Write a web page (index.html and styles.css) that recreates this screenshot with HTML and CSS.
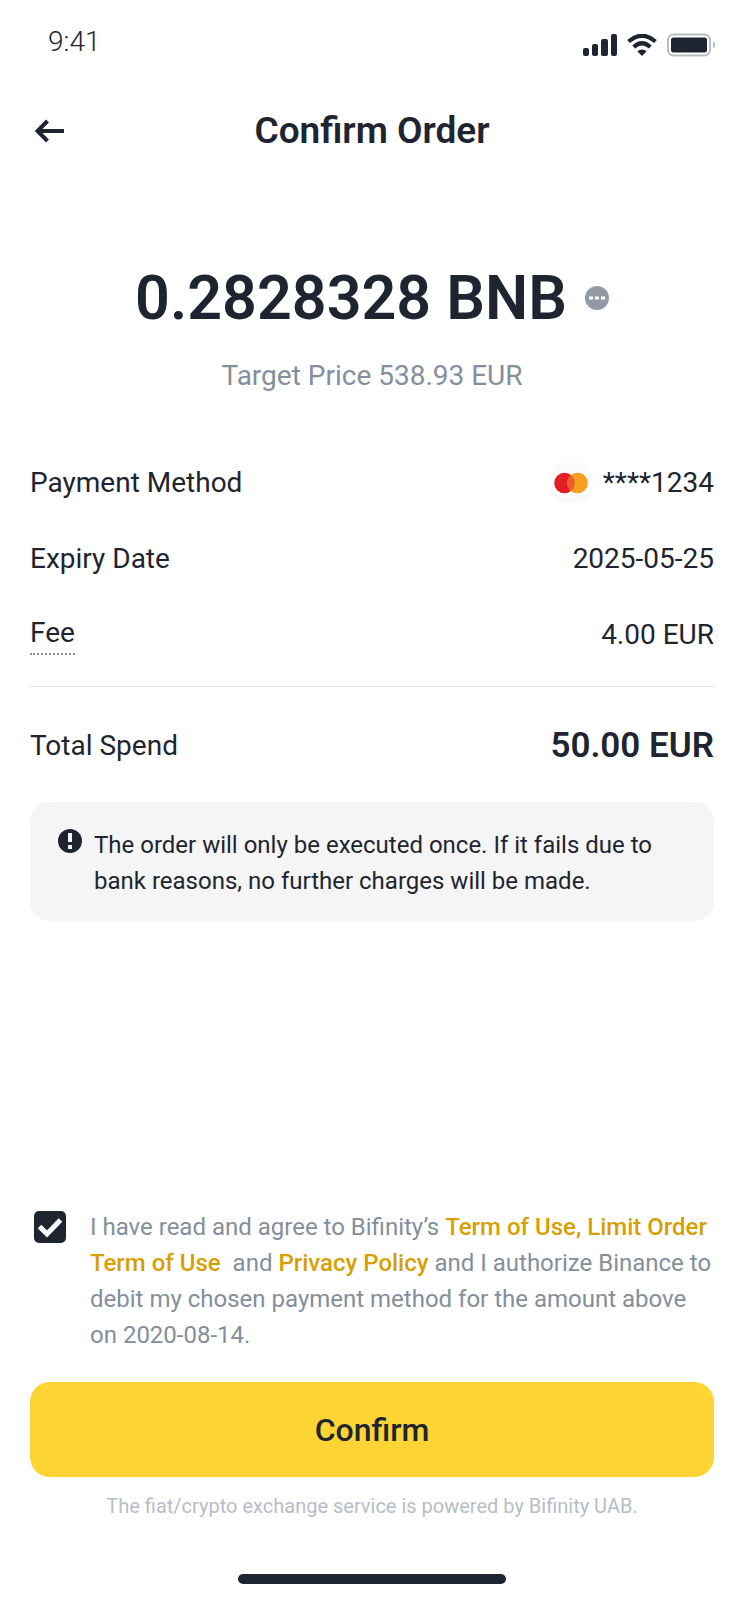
FILE: index.html
```html
<!DOCTYPE html>
<html lang="en">
<head>
    <meta charset="UTF-8">
    <meta name="viewport" content="width=device-width, initial-scale=1">
    <title>Confirm Order</title>
    <link rel="stylesheet" href="styles.css">
</head>
<body>
    <div class="screen">
        <div class="status-bar">
            <span class="time">9:41</span>
            <div class="status-icons">
                <svg width="34" height="22" viewBox="0 0 34 22" fill="#1e2530">
                    <rect x="0" y="14" width="6" height="8" rx="2"/>
                    <rect x="9" y="10" width="6" height="12" rx="2"/>
                    <rect x="18" y="5" width="7" height="17" rx="2"/>
                    <rect x="28" y="0" width="6" height="22" rx="2"/>
                </svg>
                <svg width="30" height="22" viewBox="0 0 30 22">
                    <path d="M1.5 7.5Q15-4 28.5 7.5" fill="none" stroke="#1e2530" stroke-width="4.2"/>
                    <path d="M6.7 13Q15 5.5 23.3 13" fill="none" stroke="#1e2530" stroke-width="4.2"/>
                    <path d="M10.3 17.2Q15 13.7 19.7 17.2L15 22z" fill="#1e2530"/>
                </svg>
                <svg width="49" height="24" viewBox="0 0 49 24">
                    <rect x="1" y="1.5" width="42" height="21" rx="5.5" fill="#fff" stroke="#b9bcc1" stroke-width="2"/>
                    <rect x="4" y="4.5" width="36" height="15" rx="2.5" fill="#1e2530"/>
                    <path d="M46 8.5c3 1.2 3 5.8 0 7z" fill="#b9bcc1"/>
                </svg>
            </div>
        </div>

        <header class="header">
            <button type="button" class="back" aria-label="Back">
                <svg width="30" height="24" viewBox="0 0 30 24" fill="none" stroke="#1e2530" stroke-width="4">
                    <path d="M12.5 2L2.500 12l10 10M3 12h26"/>
                </svg>
            </button>
            <h1 class="title">Confirm Order</h1>
        </header>

        <main class="content">
            <div class="amount">
                <span>0.2828328 BNB</span>
                <button type="button" class="more" aria-label="More">
                    <svg width="24" height="24" viewBox="0 0 24 24">
                        <circle cx="12" cy="12" r="12" fill="#929aa5"/>
                        <path d="M4 10.500h4v3H4zM10 10.500h4v3h-4zM16 10.500h4v3h-4z" fill="#fff"/>
                    </svg>
                </button>
            </div>
            <p class="target">Target Price 538.93 EUR</p>

            <dl class="details">
                <div class="row">
                    <dt>Payment Method</dt>
                    <dd class="card">
                        <svg width="40" height="40" viewBox="0 0 40 40">
                            <rect width="40" height="40" rx="10" fill="#fafafa"/>
                            <circle cx="13.500" cy="20" r="10.300" fill="#e61c24"/>
                            <circle cx="26.500" cy="20" r="10.300" fill="#f59f1d"/>
                            <path d="M20 12a10.300 10.300 0 0 1 0 16a10.300 10.300 0 0 1 0-16z" fill="#ea5d2c"/>
                        </svg>
                        ****1234
                    </dd>
                </div>
                <div class="row">
                    <dt>Expiry Date</dt>
                    <dd>2025-05-25</dd>
                </div>
                <div class="row">
                    <dt class="hint">Fee</dt>
                    <dd>4.00 EUR</dd>
                </div>
            </dl>

            <div class="row total">
                <span>Total Spend</span>
                <strong>50.00 EUR</strong>
            </div>

            <div class="notice">
                <svg class="notice-icon" width="24" height="24" viewBox="0 0 24 24">
                    <circle cx="12" cy="12" r="12" fill="#1e2530"/>
                    <path d="M10 4h4v9h-4zM10 16h4v4h-4z" fill="#f5f5f5"/>
                </svg>
                <p>The order will only be executed once. If it fails due to<br>
                bank reasons, no further charges will be made.</p>
            </div>
        </main>

        <footer class="footer">
            <div class="agree">
                <span class="check">
                    <input type="checkbox" id="agree" checked>
                    <svg class="tick" width="32" height="32" viewBox="0 0 32 32" fill="none" stroke="#fff" stroke-width="5">
                        <path d="M5.500 15.500l7.500 7.500L26.500 9"/>
                    </svg>
                </span>
                <label for="agree">I have read and agree to Bifinity’s <a href="#">Term of Use,</a> <a href="#">Limit Order<br>
                Term of Use</a>&nbsp; and <a href="#">Privacy Policy</a> and I authorize Binance to<br>
                debit my chosen payment method for the amount above<br>
                on 2020-08-14.</label>
            </div>
            <button type="button" class="confirm">Confirm</button>
            <p class="powered">The fiat/crypto exchange service is powered by Bifinity UAB.</p>
            <div class="home-bar"></div>
        </footer>
    </div>
</body>
</html>
```

FILE: styles.css
```css
* {
    box-sizing: border-box;
}

body {
    margin: 0;
    background: #fff;
    color: #1e2530;
    font-family: Roboto, "Liberation Sans", sans-serif;
    font-size: 28px;
    line-height: 36px;
}

h1, p, dl, dd {
    margin: 0;
}

svg {
    display: block;
    flex: none;
}

button {
    border: none;
    padding: 0;
    background: none;
    color: inherit;
    font-family: inherit;
    cursor: pointer;
}

.screen {
    display: flex;
    flex-direction: column;
    min-height: 100vh;
}

.status-bar {
    display: flex;
    justify-content: space-between;
    align-items: center;
    padding: 24px 28px 0 48px;
}

.time {
    font-size: 28px;
    font-weight: 300;
}

.status-icons {
    display: flex;
    align-items: center;
    gap: 10px;
    padding-top: 6px;
}

.header {
    display: grid;
    grid-template-columns: 30px 1fr 30px;
    align-items: center;
    padding: 51px 35px 0;
}

.title {
    font-size: 37px;
    line-height: 40px;
    font-weight: 600;
    text-align: center;
}

.content {
    padding: 115px 30px 0;
}

.amount {
    display: flex;
    justify-content: center;
    align-items: center;
    gap: 18px;
    font-size: 61px;
    line-height: 64px;
    font-weight: 600;
}

.target {
    margin-top: 28px;
    color: #848e9c;
    text-align: center;
}

.details {
    display: flex;
    flex-direction: column;
    gap: 40px;
    padding: 71px 0 33px;
    border-bottom: 1px solid #e6e6e6;
}

.row {
    display: flex;
    justify-content: space-between;
    align-items: center;
    height: 36px;
}

.card {
    display: flex;
    align-items: center;
    gap: 12px;
}

.hint {
    height: 40px;
    border-bottom: 2px dotted #848e9c;
}

.total {
    height: 40px;
    margin-top: 39px;
}

.total strong {
    font-size: 35px;
    font-weight: 600;
}

.notice {
    display: flex;
    gap: 12px;
    margin-top: 36px;
    padding: 25px 28px 22px;
    border-radius: 20px;
    background: #f5f5f5;
    font-size: 24px;
}

.notice-icon {
    margin-top: 2px;
}

.footer {
    margin-top: auto;
    padding: 32px 30px 16px;
}

.agree {
    display: flex;
    gap: 24px;
    padding-left: 4px;
    color: #848e9c;
    font-size: 24px;
    white-space: nowrap;
}

.check {
    position: relative;
    flex: none;
    width: 32px;
    height: 32px;
    margin-top: 2px;
}

.check input {
    display: block;
    appearance: none;
    width: 32px;
    height: 32px;
    margin: 0;
    border: 2px solid #1e2530;
    border-radius: 5px;
}

.check input:checked {
    background: #1e2530;
}

.tick {
    position: absolute;
    top: 0;
    left: 0;
    pointer-events: none;
}

.check input:not(:checked) + .tick {
    display: none;
}

.agree a {
    color: #d89f00;
    font-weight: 500;
    text-decoration: none;
}

.confirm {
    display: block;
    width: 100%;
    height: 95px;
    margin-top: 29px;
    border-radius: 20px;
    background: #fcd535;
    font-size: 32px;
    font-weight: 500;
}

.powered {
    margin-top: 15px;
    color: #b7bdc6;
    font-size: 20px;
    line-height: 28px;
    text-align: center;
}

.home-bar {
    width: 268px;
    height: 10px;
    margin: 54px auto 0;
    border-radius: 5px;
    background: #1e2530;
}
```
